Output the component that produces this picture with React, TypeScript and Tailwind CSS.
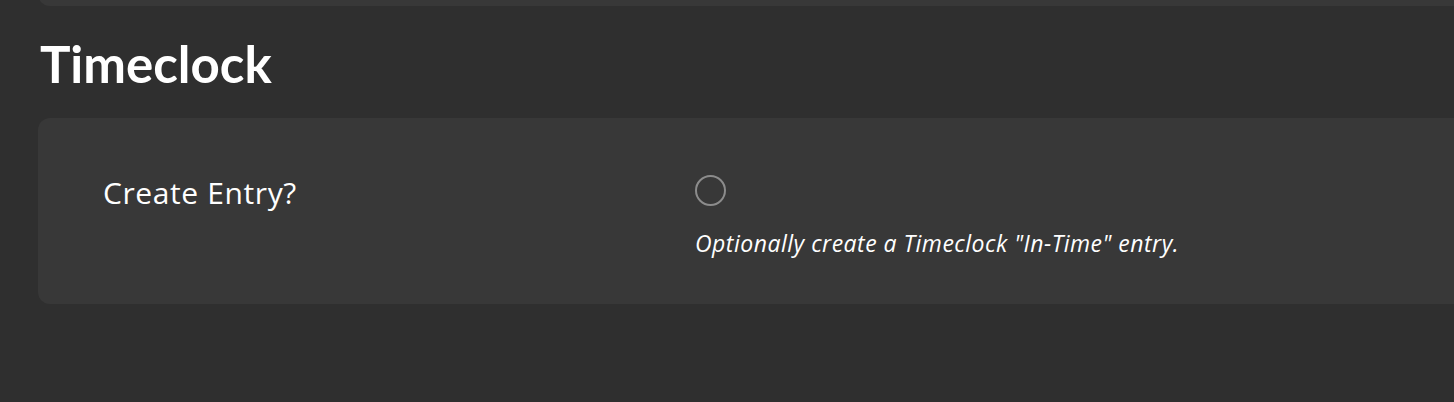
export default function App() {
  return (
    <div className="min-h-[402px] w-full overflow-hidden bg-[#2f2f2f] font-['Lato',sans-serif] text-white">
      <div className="pl-[38px]">
        {/* tail of the card above */}
        <div className="-mt-[20px] h-[26px] rounded-b-xl bg-[#383838] -mr-4" />

        <h2 className="mt-[28px] pl-[2px] text-[51px] font-bold leading-[60px]">
          Timeclock
        </h2>

        <div className="mt-[24px] -mr-4 flex h-[186px] rounded-l-xl bg-[#383838] pt-[57px]">
          <div className="w-[657px] pl-[65px] font-['Open_Sans',sans-serif] text-[30px] leading-[36px] tracking-[0.6px]">
            Create Entry?
          </div>
          <div className="flex flex-col">
            <div className="h-[31px] w-[31px] rounded-full border-2 border-[#8c8c8c]" />
            <p className="mt-[22px] font-['Open_Sans',sans-serif] text-[23px] italic leading-[30px] tracking-[0.5px]">
              Optionally create a Timeclock "In-Time" entry.
            </p>
          </div>
        </div>
      </div>
    </div>
  );
}
